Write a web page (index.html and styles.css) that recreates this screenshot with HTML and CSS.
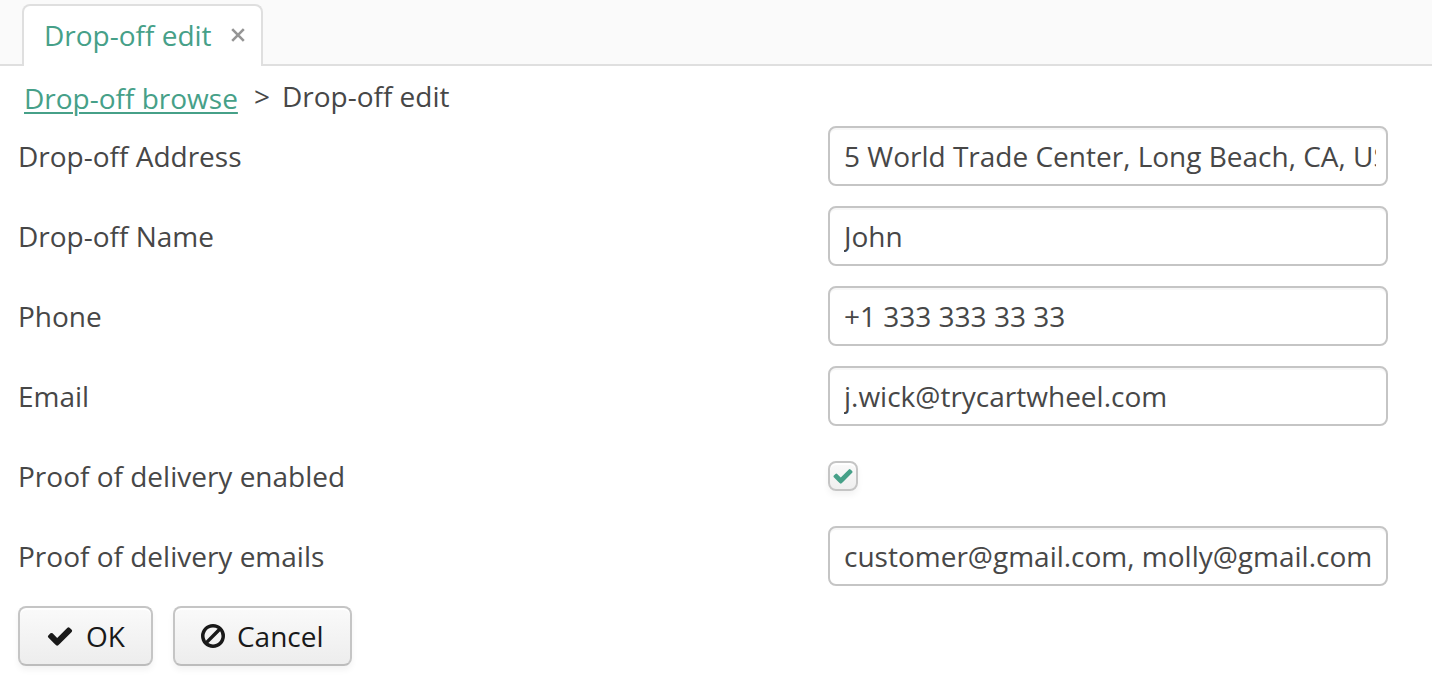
FILE: index.html
```html
<!DOCTYPE html>
<html lang="en">
    <head>
        <meta charset="UTF-8" />
        <meta name="viewport" content="width=device-width, initial-scale=1.0" />
        <title>Drop-off edit</title>
        <link rel="stylesheet" href="styles.css">
    </head>

    <body>
        <div class="tab-bar">
            <div class="tab">
                <span>Drop-off edit</span>
                <button type="button" class="tab-close" aria-label="Close tab">
                    <svg viewBox="0 0 14 14"><path d="M1.200 1.200L12.800 12.800M12.800 1.200L1.200 12.800" /></svg>
                </button>
            </div>
        </div>

        <nav class="breadcrumbs">
            <a href="#">Drop-off browse</a>
            <span class="separator">&gt;</span>
            <span>Drop-off edit</span>
        </nav>

        <form class="editor">
            <div class="field">
                <label for="address">Drop-off Address</label>
                <input class="text-field" id="address" type="text" value="5 World Trade Center, Long Beach, CA, USA" />
            </div>
            <div class="field">
                <label for="name">Drop-off Name</label>
                <input class="text-field" id="name" type="text" value="John" />
            </div>
            <div class="field">
                <label for="phone">Phone</label>
                <input class="text-field" id="phone" type="text" value="+1 333 333 33 33" />
            </div>
            <div class="field">
                <label for="email">Email</label>
                <input class="text-field" id="email" type="text" value="j.wick@trycartwheel.com" />
            </div>
            <div class="field">
                <label for="proof">Proof of delivery enabled</label>
                <div class="checkbox">
                    <input id="proof" type="checkbox" checked />
                    <svg class="tick" viewBox="0 0 1792 1792"><path d="M1671 566q0 40-28 68l-724 724-136 136q-28 28-68 28t-68-28l-136-136-362-362q-28-28-28-68t28-68l136-136q28-28 68-28t68 28l294 295 656-657q28-28 68-28t68 28l136 136q28 28 28 68z" /></svg>
                </div>
            </div>
            <div class="field">
                <label for="proof-emails">Proof of delivery emails</label>
                <input class="text-field" id="proof-emails" type="text" value="customer@gmail.com, molly@gmail.com" />
            </div>

            <div class="actions">
                <button type="button" class="button">
                    <svg class="icon" viewBox="0 0 1792 1792"><path d="M1671 566q0 40-28 68l-724 724-136 136q-28 28-68 28t-68-28l-136-136-362-362q-28-28-28-68t28-68l136-136q28-28 68-28t68 28l294 295 656-657q28-28 68-28t68 28l136 136q28 28 28 68z" /></svg>
                    <span>OK</span>
                </button>
                <button type="button" class="button">
                    <svg class="icon" viewBox="128 0 1536 1792"><path d="M1440 893q0-161-87-295l-754 753q137 89 297 89 111 0 211.500-43.500t173.500-116.500 116-174.500 43-212.500zm-999 299l755-754q-135-91-300-91-148 0-273 73t-198 199-73 274q0 162 89 299zm1223-299q0 157-61 300t-163.500 246-245 164-298.500 61-298.500-61-245-164-163.500-246-61-300 61-299.500 163.500-245.500 245-164 298.500-61 298.500 61 245 164 163.500 245.500 61 299.500z" /></svg>
                    <span>Cancel</span>
                </button>
            </div>
        </form>
    </body>
</html>
```

FILE: styles.css
```css
* {
    box-sizing: border-box;
}

body {
    margin: 0;
    background: white;
    color: #474747;
    font-family: "Open Sans", sans-serif;
    font-size: 28px;
    line-height: 38px;
}

input,
button {
    font: inherit;
    color: inherit;
}

.tab-bar {
    display: flex;
    padding: 4px 22px 0;
    background: #fafafa;
    box-shadow: inset 0 -2px #dfdfdf;
}

.tab {
    display: flex;
    align-items: center;
    height: 62px;
    padding: 0 16px 2px 20px;
    gap: 19px;
    border: 2px solid #dfdfdf;
    border-bottom: none;
    border-radius: 8px 8px 0 0;
    background: white;
    color: #46a088;
}

.tab-close {
    display: flex;
    padding: 0;
    border: none;
    background: none;
    cursor: pointer;
}

.tab-close svg {
    width: 14px;
    height: 14px;
    fill: none;
    stroke: #959595;
    stroke-width: 2.600;
}

.breadcrumbs {
    display: flex;
    padding: 11px 24px;
}

.breadcrumbs a {
    padding-top: 2px;
    margin-bottom: -2px;
    color: #46a088;
    text-decoration-thickness: 2px;
    text-underline-offset: 3px;
}

.separator {
    padding: 0 12px 0 16px;
}

.editor {
    display: flex;
    flex-direction: column;
    gap: 20px;
    padding: 0 44px 20px 18px;
}

.field {
    display: grid;
    grid-template-columns: 1fr minmax(0, 560px);
    align-items: center;
    min-height: 60px;
}

.text-field {
    width: 100%;
    height: 60px;
    padding: 0 10px 0 14px;
    border: 2px solid #c5c5c5;
    border-radius: 8px;
    background: white;
    box-shadow: inset 0 2px #f7f7f7;
}

.checkbox {
    position: relative;
    width: 30px;
    height: 30px;
}

.checkbox input {
    appearance: none;
    display: block;
    width: 30px;
    height: 30px;
    margin: 0;
    border: 2px solid #c5c5c5;
    border-radius: 8px;
    background: linear-gradient(#fafafa, #efefef);
    box-shadow: inset 0 2px white, 0 4px 6px rgba(0, 0, 0, 0.05);
}

.tick {
    display: none;
    position: absolute;
    inset: 4px;
    fill: #46a088;
    pointer-events: none;
}

.checkbox input:checked + .tick {
    display: block;
}

.actions {
    display: flex;
    gap: 20px;
}

.button {
    display: flex;
    align-items: center;
    gap: 12px;
    height: 60px;
    padding: 0 26px;
    border: 2px solid #c5c5c5;
    border-bottom-color: #bcbcbc;
    border-radius: 8px;
    background: linear-gradient(#fafafa, #ededed);
    box-shadow: inset 0 2px white, 0 4px 6px rgba(0, 0, 0, 0.05);
    color: #191919;
    cursor: pointer;
}

.icon {
    height: 28px;
    fill: currentColor;
}
```
